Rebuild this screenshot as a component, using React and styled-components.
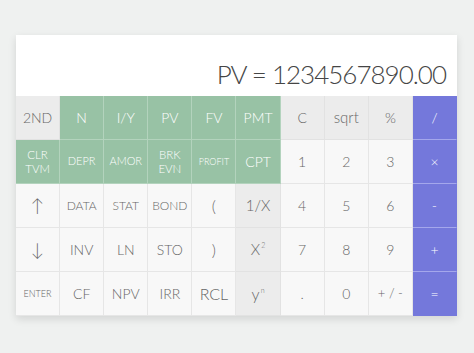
import React from 'react'
import styled, { createGlobalStyle } from 'styled-components'

const Global = createGlobalStyle`
  html, body {
    margin: 0;
    padding: 0;
    background: #eff1f0;
    font-family: Lato, "Noto Sans", sans-serif;
  }
`

const Page = styled.div`
  width: 474px;
  height: 353px;
  padding: 35px 0 0 16px;
  box-sizing: border-box;
`

const Card = styled.div`
  width: 441px;
  background: #fff;
  box-shadow: 0 3px 8px rgba(0, 0, 0, 0.12);
`

const Display = styled.div`
  height: 61px;
  display: flex;
  align-items: flex-end;
  justify-content: flex-end;
  padding: 0 11px 6px 0;
  box-sizing: border-box;
  font-size: 26px;
  font-weight: 300;
  color: #454545;
  letter-spacing: -1px;
`

const Keys = styled.div`
  display: grid;
  grid-template-columns: repeat(10, 1fr);
  grid-auto-rows: 44px;
`

const tones = {
  light: { bg: '#f8f8f8', fg: '#666', line: '#e6e6e6' },
  gray: { bg: '#ececec', fg: '#666', line: '#e2e2e2' },
  green: { bg: '#98c2a5', fg: '#ffffff', line: '#b3d3bd' },
  purple: { bg: '#7478db', fg: '#ffffff', line: '#a4a7ec' },
}

const Key = styled.div`
  display: flex;
  flex-direction: column;
  align-items: center;
  justify-content: center;
  text-align: center;
  background: ${p => tones[p.$tone].bg};
  color: ${p => tones[p.$tone].fg};
  border-right: 1px solid ${p => (p.$tone === 'purple' ? 'transparent' : tones[p.$tone].line)};
  border-bottom: 1px solid ${p => tones[p.$tone].line};
  font-size: ${p => p.$size || 14}px;
  font-weight: 300;
  line-height: 1.1;
  box-sizing: border-box;
  &:nth-last-child(-n + 10) {
    border-bottom-color: ${p => (p.$tone === 'purple' ? tones.purple.bg : tones[p.$tone].line)};
  }
`

const Line = styled.span`
  display: block;
  line-height: 14px;
`

const Sup = styled.sup`
  font-size: 7px;
  vertical-align: 7px;
  margin-left: 1px;
`

const k = (label, tone = 'light', size) => ({ label, tone, size })
const two = (a, b) => <><Line>{a}</Line><Line>{b}</Line></>

const rows = [
  [k('2ND', 'gray'), k('N', 'green'), k('I/Y', 'green'), k('PV', 'green'), k('FV', 'green'), k('PMT', 'green'), k('C', 'gray'), k('sqrt', 'gray', 15), k('%', 'gray'), k('/', 'purple')],
  [k(two('CLR', 'TVM'), 'green', 11.5), k('DEPR', 'green', 11), k('AMOR', 'green', 11), k(two('BRK', 'EVN'), 'green', 11.5), k('PROFIT', 'green', 9), k('CPT', 'green'), k('1'), k('2'), k('3'), k('×', 'purple')],
  [k('↑', 'light', 18), k('DATA', 'light', 12), k('STAT', 'light', 12), k('BOND', 'light', 12), k('(', 'light', 16), k('1/X', 'gray', 15), k('4'), k('5'), k('6'), k('-', 'purple')],
  [k('↓', 'light', 18), k('INV'), k('LN'), k('STO'), k(')', 'light', 16), k(<span>X<Sup>2</Sup></span>, 'gray', 15), k('7'), k('8'), k('9'), k('+', 'purple')],
  [k('ENTER', 'light', 9), k('CF'), k('NPV'), k('IRR'), k('RCL', 'light', 16), k(<span>y<Sup>n</Sup></span>, 'gray', 16), k('.'), k('0'), k('+ / -', 'light', 13), k('=', 'purple')],
]

export default function App() {
  return (
    <Page>
      <Global />
      <Card>
        <Display>PV = 1234567890.00</Display>
        <Keys>
          {rows.flat().map((key, i) => (
            <Key key={i} $tone={key.tone} $size={key.size}>{key.label}</Key>
          ))}
        </Keys>
      </Card>
    </Page>
  )
}
